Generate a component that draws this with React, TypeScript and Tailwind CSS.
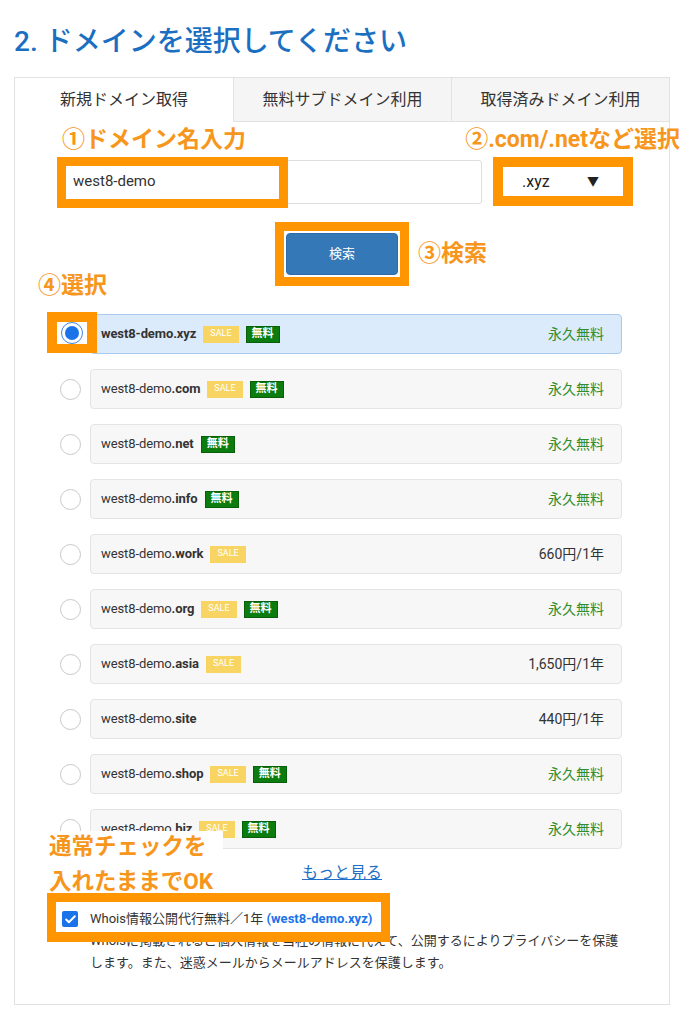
import { Check } from "lucide-react";

type Domain = {
  tld: string;
  sale?: boolean;
  free?: boolean;
  price: string;
  selected?: boolean;
};

const domains: Domain[] = [
  { tld: "xyz", sale: true, free: true, price: "永久無料", selected: true },
  { tld: "com", sale: true, free: true, price: "永久無料" },
  { tld: "net", free: true, price: "永久無料" },
  { tld: "info", free: true, price: "永久無料" },
  { tld: "work", sale: true, price: "660円/1年" },
  { tld: "org", sale: true, free: true, price: "永久無料" },
  { tld: "asia", sale: true, price: "1,650円/1年" },
  { tld: "site", price: "440円/1年" },
  { tld: "shop", sale: true, free: true, price: "永久無料" },
  { tld: "biz", sale: true, free: true, price: "永久無料" },
];

function Radio({ checked }: { checked?: boolean }) {
  if (checked) {
    return (
      <span className="flex h-[22px] w-[22px] items-center justify-center rounded-full border-[1.5px] border-[#3d86e6] bg-white">
        <span className="h-[14px] w-[14px] rounded-full bg-[#1a73e8]" />
      </span>
    );
  }
  return <span className="block h-[21px] w-[21px] rounded-full border border-[#c8c8c8] bg-white" />;
}

function DomainRow({ d }: { d: Domain }) {
  return (
    <div className="relative flex h-[40px] items-center">
      <div className="flex h-full w-[43px] items-center pl-[13px]">
        {!d.selected && <Radio />}
      </div>
      <div
        className={
          d.selected
            ? "flex h-full flex-1 items-center rounded-[4px] border border-[#a9c9ee] bg-[#dcebfb] pl-[10px] pr-[17px]"
            : "flex h-full flex-1 items-center rounded-[4px] border border-[#e4e4e4] bg-[#f7f7f7] pl-[10px] pr-[17px]"
        }
      >
        <span className="text-[13px] tracking-[-0.1px] text-[#333]">
          <span className={d.selected ? "font-bold" : ""}>west8-demo</span>
          <span className="font-bold">.{d.tld}</span>
        </span>
        {d.sale && (
          <span className="ml-[7px] flex h-[17px] items-center bg-[#f8d562] px-[7px] text-[9px] text-white">
            SALE
          </span>
        )}
        {d.free && (
          <span className="ml-[7px] flex h-[17px] items-center border border-[#08600a] bg-[#0b7c0d] px-[5px] text-[11px] font-bold text-white">
            無料
          </span>
        )}
        <span
          className={
            d.price === "永久無料"
              ? "ml-auto text-[14px] text-[#2f8d2c]"
              : "ml-auto text-[14px] text-[#333]"
          }
        >
          {d.price}
        </span>
      </div>
      {d.selected && (
        <div className="absolute left-0 top-[-2px] flex h-[41px] w-[50px] items-center justify-center border-[10px] border-b-[9px] border-[#ff9500] bg-white">
          <Radio checked />
        </div>
      )}
    </div>
  );
}

export default function App() {
  return (
    <div className="min-h-screen bg-white pt-[22px] pb-[19px] font-[Roboto,'Noto_Sans_CJK_JP',sans-serif]">
      <h2 className="mb-[15px] h-[40px] pl-[14px] text-[28px] leading-[40px] font-medium text-[#1b6fc1]">
        2. ドメインを選択してください
      </h2>

      <div className="mx-[14px] w-[656px] border border-[#e2e2e2] pb-[30px]">
        {/* tabs */}
        <div className="grid h-[44px] grid-cols-3 text-[16px] text-[#333]">
          <div className="flex items-center justify-center bg-white">新規ドメイン取得</div>
          <div className="flex items-center justify-center border-b border-l border-[#e2e2e2] bg-[#f5f5f5]">
            無料サブドメイン利用
          </div>
          <div className="flex items-center justify-center border-b border-l border-[#e2e2e2] bg-[#f5f5f5]">
            取得済みドメイン利用
          </div>
        </div>

        {/* input */}
        <div className="pl-[47px] pr-[36px] pt-[3px]">
          <div className="flex h-[30px] items-center justify-between whitespace-nowrap text-[23px] leading-[30px] font-bold text-[#f7961c]">
            <span>①ドメイン名入力</span>
            <span className="-mr-[47px]">②.com/.netなど選択</span>
          </div>
          <div className="mt-[2px] flex h-[49px] items-center gap-[11px]">
            <div className="relative h-[44px] flex-1">
              <div className="flex h-full items-center rounded-[3px] border border-[#dedede] bg-white pl-[10px] text-[15px] text-[#333]">
                west8-demo
              </div>
              <div className="pointer-events-none absolute left-[-5px] top-[-3px] h-[51px] w-[231px] border-[9px] border-[#ff9500]" />
            </div>
            <div className="flex h-[49px] w-[140px] border-[10px] border-[#ff9500] bg-white">
              <div className="flex flex-1 items-center justify-between pl-[19px] pr-[24px] text-[16px] text-[#222]">
                <span>.xyz</span>
                <span className="text-[12px]">▼</span>
              </div>
            </div>
          </div>
        </div>

        {/* search */}
        <div className="mt-[16px] flex justify-center">
          <div className="relative h-[64px] w-[134px] border-[9px] border-[#ff9500] bg-white p-[2px]">
            <button className="flex h-full w-full items-center justify-center rounded-[4px] border border-[#2d6ca8] bg-[#3478b8] text-[13px] text-white">
              検索
            </button>
            <span className="absolute left-[calc(100%+18px)] top-1/2 -translate-y-1/2 whitespace-nowrap text-[23px] font-bold text-[#f7961c]">
              ③検索
            </span>
          </div>
        </div>

        {/* domain list */}
        <div className="relative mt-[28px] pl-[32px] pr-[47px]">
          <span className="absolute left-[23px] top-[-41px] text-[23px] leading-[26px] font-bold text-[#f7961c]">
            ④選択
          </span>

          <div className="flex flex-col gap-[15px]">
            {domains.map((d) => (
              <DomainRow key={d.tld} d={d} />
            ))}
          </div>

          <div className="absolute left-[32px] top-[517px] h-[32px] w-[176px] bg-white pl-[2px] text-[22.5px] leading-[30px] font-bold text-[#f7961c]">
            通常チェックを
          </div>
          <div className="absolute left-[34px] top-[552px] text-[22.5px] leading-[30px] font-bold text-[#f7961c]">
            入れたままでOK
          </div>

          <div className="-ml-[32px] -mr-[47px] mt-[12px] h-[24px] text-center text-[16px] leading-[24px]">
            <a className="text-[#1f70c6] underline">もっと見る</a>
          </div>
        </div>

        {/* whois */}
        <div className="mt-[23px] pl-[47px] pr-[40px]">
          <div className="relative flex h-[22px] items-center gap-[12px] text-[13px] text-[#333]">
            <span className="flex h-[16px] w-[16px] items-center justify-center rounded-[2px] bg-[#1a73e8]">
              <Check size={13} strokeWidth={3.5} className="text-white" />
            </span>
            <span>
              Whois情報公開代行無料／1年{" "}
              <span className="font-bold text-[#1a73e8]">(west8-demo.xyz)</span>
            </span>
            <div className="pointer-events-none absolute left-[-15px] top-[-15px] z-10 h-[49px] w-[343px] border-[9px] border-b-[10px] border-[#ff9500]" />
          </div>
          <p className="pl-[28px] text-[13px] leading-[22px] text-[#333]">
            Whoisに掲載されるご個人情報を当社の情報に代えて、公開するによりプライバシーを保護
            <br />
            します。また、迷惑メールからメールアドレスを保護します。
          </p>
        </div>
      </div>
    </div>
  );
}
